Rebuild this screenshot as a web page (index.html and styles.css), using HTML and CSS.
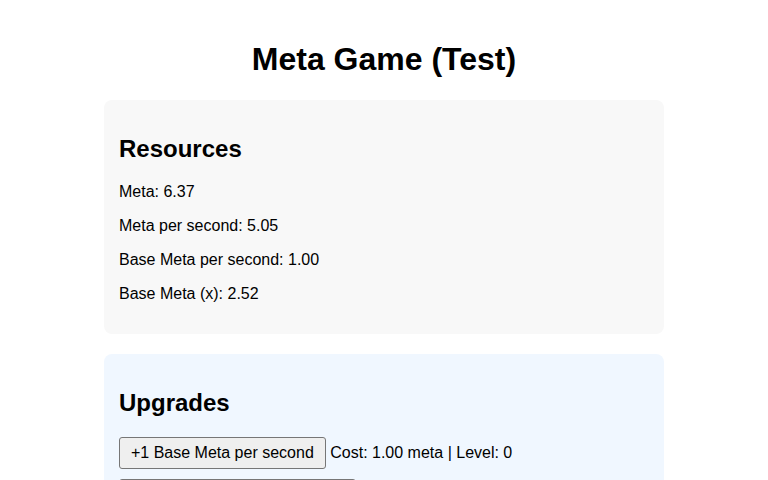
FILE: index.html
```html
<!DOCTYPE html>
<html lang="en">
    <head>
        <meta charset="UTF-8">
        <meta name="viewport" content="width=device-width, initial-scale=1.0">
        <title>Meta Game (Test)</title>
        <link rel="stylesheet" href="styles.css">
    </head>

    <body>
        <h1 class="title">Meta Game (Test)</h1>

        <div class="section resources">
            <h2>Resources</h2>
            <p>Meta: <span id="meta">6.37</span></p>
            <p>Meta per second: <span id="mps">5.05</span></p>
            <p>Base Meta per second: <span id="base-mps">1.00</span></p>
            <p>Base Meta (x): <span id="base-mult">2.52</span></p>
        </div>

        <div class="section upgrades">
            <h2>Upgrades</h2>
            <div class="upgrade">
                <button class="upgrade-button" type="button">+1 Base Meta per second</button>
                <span>Cost: 1.00 meta | Level: 0</span>
            </div>
            <div class="upgrade">
                <button class="upgrade-button" type="button">+0.10 Base Meta (x) multiplier</button>
                <span>Cost: 10.00 meta | Level: 0</span>
            </div>
        </div>
    </body>
</html>
```

FILE: styles.css
```css
body {
    margin: 0;
    padding: 20px;
    font-family: 'Liberation Sans', Arial, sans-serif;
    color: #000;
    background-color: #fff;
}

.title {
    text-align: center;
    font-size: 32px;
}

.section {
    max-width: 530px;
    margin: 0 auto 20px auto;
    padding: 15px;
    border-radius: 8px;
}

.resources {
    background-color: #f8f8f8;
}

.upgrades {
    background-color: #f0f7ff;
}

.section h2 {
    font-size: 24px;
}

.upgrade {
    margin-bottom: 10px;
}

.upgrade-button {
    font-family: 'Liberation Sans', Arial, sans-serif;
    font-size: 16px;
    padding: 6px 11px;
    background-color: #efefef;
    border: 1px solid #767676;
    border-radius: 3px;
    color: #000;
    cursor: pointer;
}

.upgrade-button:hover {
    background-color: #e5e5e5;
}
```
